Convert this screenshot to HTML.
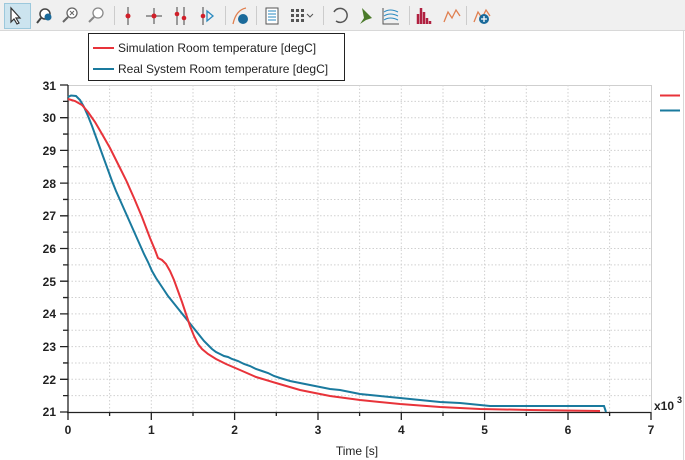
<!DOCTYPE html>
<html><head><meta charset="utf-8"><style>
html,body{margin:0;padding:0;width:685px;height:460px;overflow:hidden;background:#fff;font-family:"Liberation Sans",sans-serif}
</style></head><body>
<svg width="685" height="460" xmlns="http://www.w3.org/2000/svg" style="position:absolute;left:0;top:0">
<rect x="0" y="0" width="685" height="30" fill="#f0f0f0"/>
<line x1="0" y1="30.5" x2="685" y2="30.5" stroke="#d8d8d8"/>
<line x1="683.5" y1="31" x2="683.5" y2="460" stroke="#d8d8d8"/>
<!-- toolbar -->
<rect x="4.5" y="3.5" width="26" height="25" fill="#cce4ef" stroke="#9cc8dc"/>
<path d="M11 8 L11 22 L14 19 L17 24 L19 23 L16 18 L20 18 Z" fill="#fff" stroke="#333" stroke-width="1.2"/>
<circle cx="45" cy="14" r="5" fill="#fff" stroke="#444" stroke-width="1.5"/><line x1="41" y1="18" x2="37" y2="23" stroke="#444" stroke-width="2"/><circle cx="48" cy="17" r="3.5" fill="#1a6a9a"/>
<circle cx="72" cy="13" r="5" fill="#fff" stroke="#666" stroke-width="1.3"/><line x1="68" y1="17" x2="63" y2="22" stroke="#666" stroke-width="2"/><path d="M70 11 L74 15 M74 11 L70 15" stroke="#666"/>
<circle cx="98" cy="13" r="5" fill="#fff" stroke="#888" stroke-width="1.3"/><line x1="94" y1="17" x2="89" y2="22" stroke="#888" stroke-width="2"/>
<line x1="114.5" y1="6" x2="114.5" y2="25" stroke="#ccc"/>
<line x1="128" y1="7" x2="128" y2="25" stroke="#444"/><circle cx="128" cy="16" r="2.5" fill="#d0202a"/>
<line x1="154" y1="8" x2="154" y2="24" stroke="#444"/><line x1="146" y1="16" x2="162" y2="16" stroke="#444"/><circle cx="154" cy="16" r="2.5" fill="#d0202a"/>
<line x1="177" y1="7" x2="177" y2="25" stroke="#444"/><line x1="184" y1="7" x2="184" y2="25" stroke="#444"/><circle cx="177" cy="14" r="2.3" fill="#d0202a"/><circle cx="184" cy="18" r="2.3" fill="#d0202a"/>
<line x1="203" y1="7" x2="203" y2="25" stroke="#444"/><circle cx="203" cy="16" r="2.3" fill="#d0202a"/><path d="M207 11 L213 16 L207 21 Z" fill="none" stroke="#2a8ac0" stroke-width="1.3"/>
<line x1="225.5" y1="6" x2="225.5" y2="25" stroke="#ccc"/>
<path d="M233 24 Q236 10 246 8" fill="none" stroke="#e08050" stroke-width="1.3"/><circle cx="243" cy="19" r="5" fill="#1a6a9a"/>
<line x1="256.5" y1="6" x2="256.5" y2="25" stroke="#ccc"/>
<rect x="266" y="8" width="12" height="16" fill="#fff" stroke="#555"/><path d="M268 11h8M268 14h8M268 17h8M268 20h8" stroke="#2a8ac0"/>
<g fill="#555"><rect x="291" y="9" width="3" height="3"/><rect x="296" y="9" width="3" height="3"/><rect x="301" y="9" width="3" height="3"/><rect x="291" y="14" width="3" height="3"/><rect x="296" y="14" width="3" height="3"/><rect x="301" y="14" width="3" height="3"/><rect x="291" y="19" width="3" height="3"/><rect x="296" y="19" width="3" height="3"/><rect x="301" y="19" width="3" height="3"/></g>
<path d="M307 14 L310 17 L313 14" fill="none" stroke="#555"/>
<line x1="323.5" y1="6" x2="323.5" y2="25" stroke="#ccc"/>
<path d="M334 12 A7 7 0 1 1 336 21" fill="none" stroke="#555" stroke-width="1.5"/>
<path d="M362 8 L372 18 L366 20 L360 24 L364 18 Z" fill="#4a7a2a"/>
<path d="M384 12 Q390 8 398 12 M384 16 Q390 12 398 16 M384 20 Q390 16 398 20" fill="none" stroke="#2a8ac0"/><path d="M383 8 L383 24 L399 24" fill="none" stroke="#555"/>
<line x1="409.5" y1="6" x2="409.5" y2="25" stroke="#ccc"/>
<path d="M418 24 V14 M421 24 V8 M424 24 V12 M427 24 V18 M430 24 V21" stroke="#b02040" stroke-width="2.5"/>
<path d="M444 22 L448 12 L452 18 L456 10 L460 16" fill="none" stroke="#e08050" stroke-width="1.3"/>
<line x1="466.5" y1="6" x2="466.5" y2="25" stroke="#ccc"/>
<path d="M474 22 L478 12 L482 18 L486 10 L490 16" fill="none" stroke="#e08050" stroke-width="1.3"/><circle cx="484" cy="19" r="5" fill="#1a6a9a"/><path d="M481 19h6M484 16v6" stroke="#fff" stroke-width="1.3"/>
<!-- plot frame -->
<line x1="68" y1="85.5" x2="651" y2="85.5" stroke="#cfcfcf"/>
<line x1="651.5" y1="85" x2="651.5" y2="412" stroke="#cfcfcf"/>
<!-- grid -->
<g stroke="#d0d0d0" stroke-dasharray="1.5,2">
<line x1="68" y1="101.35" x2="651" y2="101.35"/><line x1="68" y1="117.7" x2="651" y2="117.7"/><line x1="68" y1="134.05" x2="651" y2="134.05"/><line x1="68" y1="150.4" x2="651" y2="150.4"/><line x1="68" y1="166.75" x2="651" y2="166.75"/><line x1="68" y1="183.1" x2="651" y2="183.1"/><line x1="68" y1="199.45" x2="651" y2="199.45"/><line x1="68" y1="215.8" x2="651" y2="215.8"/><line x1="68" y1="232.15" x2="651" y2="232.15"/><line x1="68" y1="248.5" x2="651" y2="248.5"/><line x1="68" y1="264.85" x2="651" y2="264.85"/><line x1="68" y1="281.2" x2="651" y2="281.2"/><line x1="68" y1="297.55" x2="651" y2="297.55"/><line x1="68" y1="313.9" x2="651" y2="313.9"/><line x1="68" y1="330.25" x2="651" y2="330.25"/><line x1="68" y1="346.6" x2="651" y2="346.6"/><line x1="68" y1="362.95" x2="651" y2="362.95"/><line x1="68" y1="379.3" x2="651" y2="379.3"/><line x1="68" y1="395.65" x2="651" y2="395.65"/>
<line x1="109.6" y1="85" x2="109.6" y2="412"/><line x1="151.3" y1="85" x2="151.3" y2="412"/><line x1="193" y1="85" x2="193" y2="412"/><line x1="234.6" y1="85" x2="234.6" y2="412"/><line x1="276.3" y1="85" x2="276.3" y2="412"/><line x1="318" y1="85" x2="318" y2="412"/><line x1="359.6" y1="85" x2="359.6" y2="412"/><line x1="401.3" y1="85" x2="401.3" y2="412"/><line x1="443" y1="85" x2="443" y2="412"/><line x1="484.6" y1="85" x2="484.6" y2="412"/><line x1="526.3" y1="85" x2="526.3" y2="412"/><line x1="568" y1="85" x2="568" y2="412"/><line x1="609.6" y1="85" x2="609.6" y2="412"/>
</g>
<!-- axes -->
<g stroke="#222" stroke-width="1.3">
<line x1="68" y1="85" x2="68" y2="413"/><line x1="67" y1="412.5" x2="651" y2="412.5"/>
<path d="M60 85H68M63 101.35H68M60 117.7H68M63 134.05H68M60 150.4H68M63 166.75H68M60 183.1H68M63 199.45H68M60 215.8H68M63 232.15H68M60 248.5H68M63 264.85H68M60 281.2H68M63 297.55H68M60 313.9H68M63 330.25H68M60 346.6H68M63 362.95H68M60 379.3H68M63 395.65H68M60 412H68"/>
<path d="M68 412V420M109.6 412V416M151.3 412V420M193 412V416M234.6 412V420M276.3 412V416M318 412V420M359.6 412V416M401.3 412V420M443 412V416M484.6 412V420M526.3 412V416M568 412V420M609.6 412V416M651 412V420"/>
</g>
<g font-size="12" font-weight="bold" fill="#222" text-anchor="end">
<text x="56" y="90">31</text><text x="56" y="122">30</text><text x="56" y="155">29</text><text x="56" y="188">28</text><text x="56" y="220">27</text><text x="56" y="253">26</text><text x="56" y="286">25</text><text x="56" y="318">24</text><text x="56" y="351">23</text><text x="56" y="384">22</text><text x="56" y="416">21</text>
</g>
<g font-size="12" font-weight="bold" fill="#222" text-anchor="middle">
<text x="68" y="434">0</text><text x="151.3" y="434">1</text><text x="234.6" y="434">2</text><text x="318" y="434">3</text><text x="401.3" y="434">4</text><text x="484.6" y="434">5</text><text x="568" y="434">6</text><text x="651" y="434">7</text>
</g>
<text x="654" y="410" font-size="12" font-weight="bold" fill="#222">x10</text><text x="677" y="403" font-size="9" font-weight="bold" fill="#222">3</text>
<text x="357" y="455" font-size="12" fill="#222" text-anchor="middle">Time [s]</text>
<!-- curves -->
<polyline fill="none" stroke="#1a7a9e" stroke-width="2" points="68,97 71,95.5 76,96 80,100 84,107 88,116 92,126 96,137 100,148 104,159 108,170 112,181 116,191 120,200 124,209 128,218 132,227 136,236 140,245 144,254 148,262 152,271 156,278 160,284 164,290 168,296 172,301 176,306 180,311 184,316 188,321 192,326 196,331 200,336 204,341 208,345 212,349 216,352 220,354 224,356 228,357 232,359 238,361 244,364 250,366 256,369 262,371 268,373 274,376 280,378 290,381 300,383 310,385 320,387 330,389 340,390 350,392 360,394 380,396 400,398 420,400 440,402 460,403 470,404 480,405 490,406 604,406 606,412"/>
<polyline fill="none" stroke="#e8333a" stroke-width="2" points="68,99 75,101 82,105 88,112 95,122 102,134 110,148 118,164 126,180 134,198 142,217 150,238 155,250 158,258 162,260 166,264 170,271 174,280 178,291 182,302 186,314 190,326 194,336 198,344 202,349 208,354 216,359 226,364 240,370 256,377 276,383 300,390 330,396 360,400 400,404 440,407 480,409 530,410 600,411"/>
<!-- legend -->
<rect x="88.5" y="33.5" width="256" height="47" fill="#fff" stroke="#222"/>
<line x1="93" y1="48" x2="114" y2="48" stroke="#e8333a" stroke-width="2"/>
<line x1="93" y1="69" x2="114" y2="69" stroke="#1a7a9e" stroke-width="2"/>
<text x="118" y="52" font-size="12" fill="#222">Simulation Room temperature [degC]</text>
<text x="118" y="73" font-size="12" fill="#222">Real System Room temperature [degC]</text>
<line x1="660" y1="95.5" x2="680" y2="95.5" stroke="#e8333a" stroke-width="2"/>
<line x1="660" y1="110.5" x2="680" y2="110.5" stroke="#1a7a9e" stroke-width="2"/>
</svg>
</body></html>
